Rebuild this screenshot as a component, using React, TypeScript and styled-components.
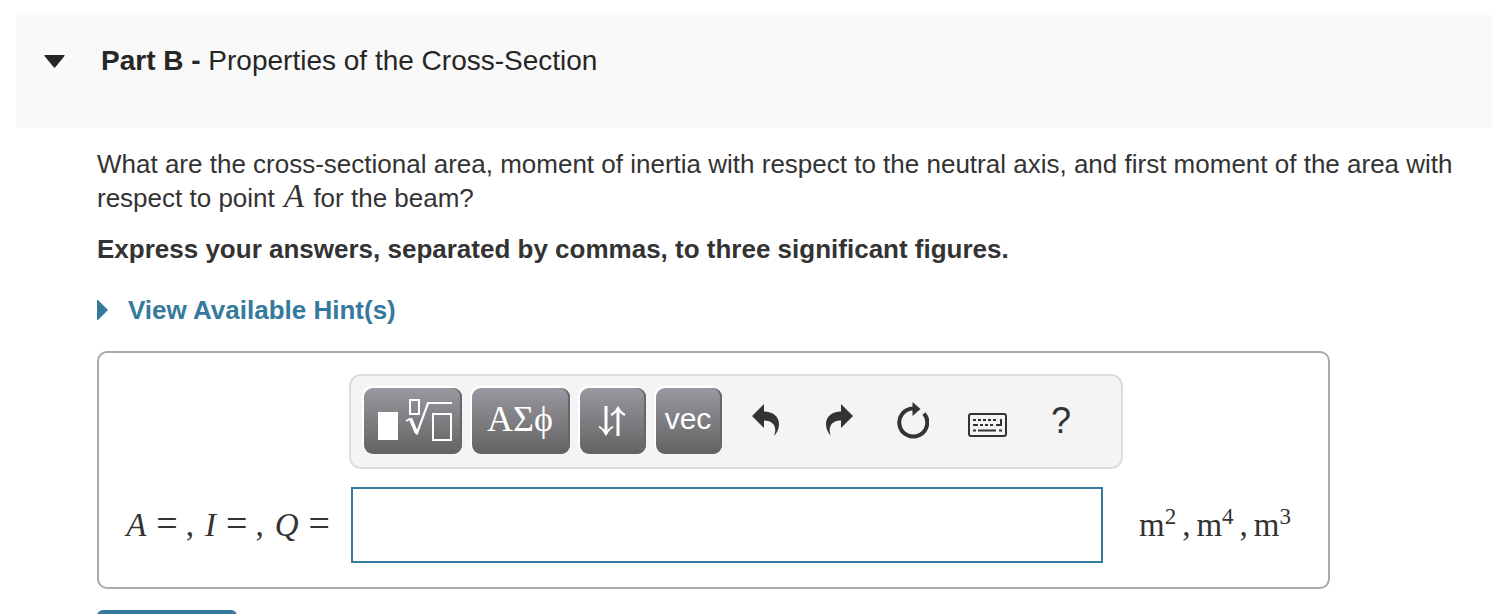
import React, { useState } from 'react';
import styled, { createGlobalStyle } from 'styled-components';

const INK = '#333333';
const BLUE = '#357a9c';
const SANS = '"Liberation Sans", Arial, Helvetica, sans-serif';
const SERIF = '"Liberation Serif", "Times New Roman", serif';

const GlobalStyle = createGlobalStyle`
  *, *::before, *::after { box-sizing: border-box; }
  body {
    margin: 0;
    background: #ffffff;
    color: ${INK};
    font-family: ${SANS};
    font-size: 26px;
    line-height: 34px;
  }
  button { font-family: inherit; cursor: pointer; }
`;

const Page = styled.main`
  height: 100vh;
  overflow: hidden;
  padding: 15px 0 0 16px;
`;

const PartHeader = styled.header`
  display: flex;
  align-items: flex-start;
  gap: 36px;
  padding: 30px 28px 51px;
  background: #f9f9f9;
  color: #262626;
`;

const Toggle = styled.button`
  display: flex;
  align-items: center;
  height: 32px;
  padding: 0;
  border: 0;
  background: none;
  color: inherit;
`;

const PartTitle = styled.h2`
  margin: 0;
  font-size: 28px;
  line-height: 32px;
  font-weight: 400;
`;

const PartBody = styled.section`
  padding: 19px 20px 0 81px;
`;

const Question = styled.p`
  margin: 0;
`;

const Instruction = styled.p`
  margin: 17px 0 0;
  font-weight: 700;
`;

const HintButton = styled.button`
  display: flex;
  align-items: center;
  gap: 20px;
  margin: 27px 0 0;
  padding: 0;
  border: 0;
  background: none;
  color: ${BLUE};
  font-size: 26px;
  line-height: 34px;
  font-weight: 700;
`;

const Variable = styled.i`
  padding: 0 2px;
  font-family: ${SERIF};
  font-size: 33px;
  line-height: 26px;
`;

const AnswerPanel = styled.div`
  display: grid;
  grid-template-columns: 250px minmax(0, 1fr) 205px;
  align-items: center;
  row-gap: 18px;
  margin: 24px 142px 0 0;
  padding: 21px 0 24px;
  border: 2px solid #a9a9a9;
  border-radius: 10px;
`;

const Toolbar = styled.div`
  grid-column: 2;
  display: flex;
  align-items: center;
  gap: 10px;
  height: 95px;
  padding: 0 13px 2px;
  border: 2px solid #dcdcdc;
  border-radius: 12px;
  background: #f4f4f4;
`;

const PaletteButton = styled.button<{ $wide?: boolean; $serif?: boolean }>`
  display: flex;
  flex: none;
  align-items: center;
  justify-content: center;
  width: ${(p) => (p.$wide ? 98 : 66)}px;
  height: 66px;
  padding: 0 2px 4px 0;
  border: 0;
  border-radius: 9px;
  background: linear-gradient(#9a98a0, #626262);
  box-shadow: -2px -2px 0 #ffffff, inset -2px 0 0 #686868;
  color: #ffffff;
  font-family: ${(p) => (p.$serif ? SERIF : SANS)};
  font-size: ${(p) => (p.$serif ? 36 : 30)}px;
  line-height: 36px;
`;

const Actions = styled.div`
  display: flex;
  margin-left: -4px;
`;

const ActionButton = styled.button`
  display: flex;
  align-items: center;
  justify-content: center;
  width: 74px;
  height: 66px;
  padding: 0;
  border: 0;
  background: none;
  color: ${INK};
  font-size: 36px;
  line-height: 36px;
`;

const AnswerLabel = styled.label`
  grid-column: 1;
  display: flex;
  align-items: baseline;
  justify-content: flex-end;
  padding-right: 19px;
  font-family: ${SERIF};
  font-size: 33px;
  line-height: 40px;
`;

const Equals = styled.span`
  padding: 0 8px;
  font-size: 38px;
  line-height: 32px;

  &:last-child { padding-right: 0; }
`;

const Comma = styled.span`
  padding-right: 9px;
`;

const AnswerInput = styled.input`
  min-width: 0;
  height: 76px;
  margin: 0 20px 0 2px;
  padding: 0 16px;
  border: 2px solid ${BLUE};
  border-radius: 0;
  outline: none;
  background: #ffffff;
  color: ${INK};
  font-family: ${SERIF};
  font-size: 33px;
`;

const Units = styled.div`
  display: flex;
  align-items: baseline;
  padding-left: 16px;
  font-family: ${SERIF};
  font-size: 33px;
  line-height: 40px;
`;

const Power = styled.sup`
  align-self: flex-start;
  font-size: 23px;
  line-height: 24px;
`;

const UnitComma = styled.span`
  padding: 0 6px;
`;

const SubmitButton = styled.button`
  display: block;
  width: 140px;
  height: 60px;
  margin-top: 21px;
  border: 0;
  border-radius: 6px;
  background: ${BLUE};
`;

const TemplatesIcon = () => (
  <svg width="80" height="44" viewBox="0 0 80 44" fill="none" stroke="#fff" aria-hidden="true">
    <rect x="6" y="15" width="20" height="28" fill="#fff" stroke="none" />
    <rect x="38" y="3" width="9" height="14" strokeWidth="2" />
    <path d="M34 24L38.500 21.500" strokeWidth="2" />
    <path d="M38.500 21.500L44.500 36" strokeWidth="3.500" />
    <path d="M44.500 37.500L56 6H80" strokeWidth="2.200" />
    <rect x="61" y="17" width="18" height="26" strokeWidth="2" />
  </svg>
);

const ArrowsIcon = () => (
  <svg width="28" height="34" viewBox="0 -4 28 34" stroke="#fff" fill="none" aria-hidden="true">
    <path d="M8 0V28M20 30V2" strokeWidth="3" />
    <path d="M1 20.500Q5.500 23 8 28Q10.500 23 15 20.500M13 9Q17.500 7 20 2Q22.500 7 27 9" strokeWidth="2" />
  </svg>
);

const UndoIcon = () => (
  <svg width="27" height="33" viewBox="0 0 27 33" fill="currentColor" aria-hidden="true">
    <path d="M0 12L12 0V7.500C21 7.500 27 12.500 27 20C27 25 25 29 22 32C25 25 23 16.500 12 16.500V24Z" />
  </svg>
);

const RedoIcon = () => (
  <svg width="27" height="33" viewBox="0 0 27 33" fill="currentColor" aria-hidden="true">
    <path d="M27 12L15 0V7.500C6 7.500 0 12.500 0 20C0 25 2 29 5 32C2 25 4 16.500 15 16.500V24Z" />
  </svg>
);

const ResetIcon = () => (
  <svg width="32" height="37" viewBox="0 0 32 37" aria-hidden="true">
    <path d="M27 11.500A14 14 0 1 1 16 6.500" fill="none" stroke="currentColor" strokeWidth="4" />
    <path d="M15.500 0L23.500 7L15.500 14Z" fill="currentColor" />
  </svg>
);

const KeyboardIcon = () => (
  <svg width="39" height="32" viewBox="0 -8 39 32" fill="none" stroke="currentColor" strokeWidth="2" aria-hidden="true">
    <rect x="1" y="1" width="37" height="22" rx="2" />
    <path d="M5 7H8M10 7H13M15 7H18M20 7H23M25 7H28" />
    <path d="M5 12H10M12 12H15M17 12H20M22 12H25M28 12H34M33 6V12" />
    <path d="M5 17.500H8M10 17.500H28M31 17.500H34" />
  </svg>
);

export default function App() {
  const [answer, setAnswer] = useState('');

  return (
    <>
      <GlobalStyle />
      <Page>
        <PartHeader>
          <Toggle type="button" aria-label="Part B" aria-expanded="true">
            <svg width="21" height="13" viewBox="0 0 21 13" fill="currentColor" aria-hidden="true">
              <path d="M1 0H20Q21 0 20.500 1L11.500 12Q10.500 13 9.500 12L0.500 1Q0 0 1 0Z" />
            </svg>
          </Toggle>
          <PartTitle>
            <b>Part B -</b> Properties of the Cross-Section
          </PartTitle>
        </PartHeader>

        <PartBody>
          <Question>
            What are the cross-sectional area, moment of inertia with respect to the neutral axis, and
            first moment of the area with respect to point <Variable>A</Variable> for the beam?
          </Question>
          <Instruction>
            Express your answers, separated by commas, to three significant figures.
          </Instruction>
          <HintButton type="button">
            <svg width="11" height="20" viewBox="0 0 11 20" fill="currentColor" aria-hidden="true">
              <path d="M0 0H1L11 10L1 20H0Z" />
            </svg>
            View Available Hint(s)
          </HintButton>

          <AnswerPanel>
            <Toolbar role="toolbar">
              <PaletteButton type="button" $wide>
                <TemplatesIcon />
              </PaletteButton>
              <PaletteButton type="button" $wide $serif>
                ΑΣϕ
              </PaletteButton>
              <PaletteButton type="button">
                <ArrowsIcon />
              </PaletteButton>
              <PaletteButton type="button">vec</PaletteButton>
              <Actions>
                <ActionButton type="button">
                  <UndoIcon />
                </ActionButton>
                <ActionButton type="button">
                  <RedoIcon />
                </ActionButton>
                <ActionButton type="button">
                  <ResetIcon />
                </ActionButton>
                <ActionButton type="button">
                  <KeyboardIcon />
                </ActionButton>
                <ActionButton type="button">?</ActionButton>
              </Actions>
            </Toolbar>

            <AnswerLabel htmlFor="answer">
              <Variable>A</Variable>
              <Equals>=</Equals>
              <Comma>,</Comma>
              <Variable>I</Variable>
              <Equals>=</Equals>
              <Comma>,</Comma>
              <Variable>Q</Variable>
              <Equals>=</Equals>
            </AnswerLabel>
            <AnswerInput
              id="answer"
              type="text"
              value={answer}
              onChange={(e) => setAnswer(e.target.value)}
            />
            <Units>
              m<Power>2</Power>
              <UnitComma>,</UnitComma>
              m<Power>4</Power>
              <UnitComma>,</UnitComma>
              m<Power>3</Power>
            </Units>
          </AnswerPanel>

          <SubmitButton type="button" />
        </PartBody>
      </Page>
    </>
  );
}
